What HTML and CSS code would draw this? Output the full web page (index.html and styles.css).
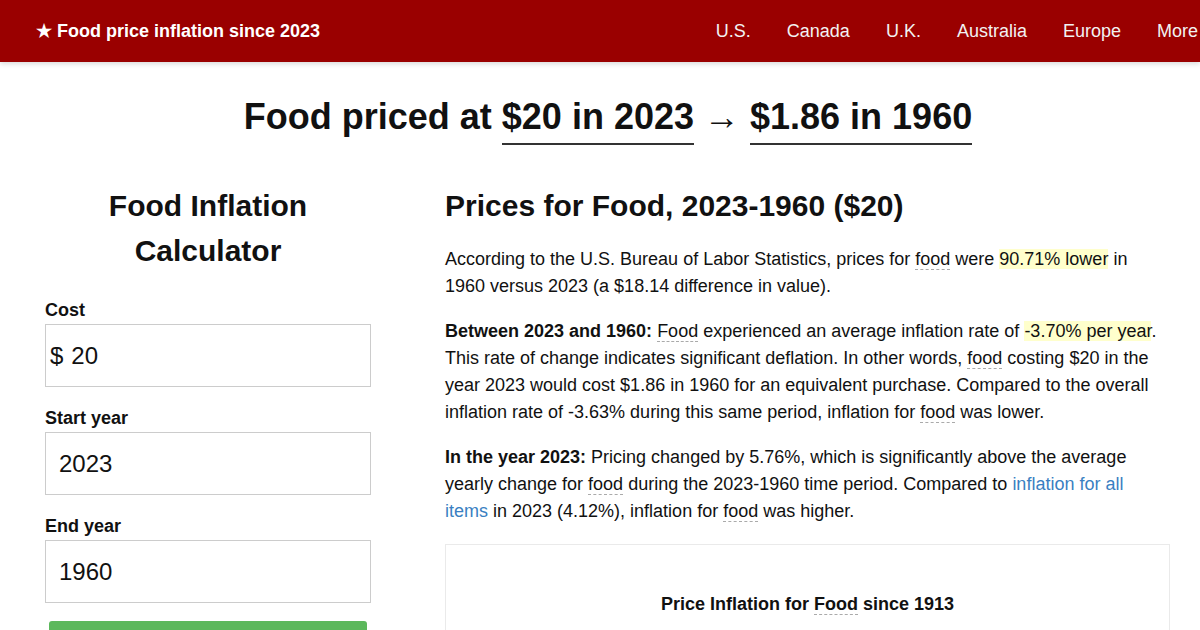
FILE: index.html
```html
<!DOCTYPE html>
<html lang="en">
<head>
<meta charset="utf-8">
<title>Food price inflation since 2023</title>
<link rel="stylesheet" href="styles.css">
</head>
<body>
<header class="topbar">
  <a class="brand" href="#">★ Food price inflation since 2023</a>
  <nav class="nav">
    <a href="#">U.S.</a>
    <a href="#">Canada</a>
    <a href="#">U.K.</a>
    <a href="#">Australia</a>
    <a href="#">Europe</a>
    <a href="#">More</a>
  </nav>
</header>

<h1 class="headline">Food priced at <span class="ul">$20 in 2023</span> <span class="arrow">→</span> <span class="ul">$1.86 in 1960</span></h1>

<main class="page">
  <aside class="calc">
    <h2 class="calc-title">Food Inflation Calculator</h2>
    <label class="field-label">Cost</label>
    <div class="field field-money"><span class="prefix">$</span><span class="value">20</span></div>
    <label class="field-label">Start year</label>
    <div class="field"><span class="value">2023</span></div>
    <label class="field-label">End year</label>
    <div class="field"><span class="value">1960</span></div>
    <button class="btn">Calculate</button>
  </aside>

  <section class="content">
    <h2 class="section-title">Prices for Food, 2023-1960 ($20)</h2>
    <p>According to the U.S. Bureau of Labor Statistics, prices for <span class="term">food</span> were <span class="hl">90.71% lower</span> in 1960 versus 2023 (a $18.14 difference in value).</p>
    <p><b>Between 2023 and 1960:</b> <span class="term">Food</span> experienced an average inflation rate of <span class="hl">-3.70% per year</span>. This rate of change indicates significant deflation. In other words, <span class="term">food</span> costing $20 in the year 2023 would cost $1.86 in 1960 for an equivalent purchase. Compared to the overall inflation rate of -3.63% during this same period, inflation for <span class="term">food</span> was lower.</p>
    <p><b>In the year 2023:</b> Pricing changed by 5.76%, which is significantly above the average yearly change for <span class="term">food</span> during the 2023-1960 time period. Compared to <a class="link" href="#">inflation for all items</a> in 2023 (4.12%), inflation for <span class="term">food</span> was higher.</p>
    <div class="chart">
      <div class="chart-title">Price Inflation for <span class="term">Food</span> since 1913</div>
    </div>
  </section>
</main>
</body>
</html>
```

FILE: styles.css
```css
* { box-sizing: border-box; }
html, body { margin: 0; padding: 0; }
body {
  font-family: "Liberation Sans", Arial, sans-serif;
  color: #111;
  background: #fff;
  overflow: hidden;
}

.topbar {
  height: 62px;
  background: #9a0000;
  display: flex;
  align-items: center;
  padding-left: 36px;
  box-shadow: 0 2px 5px rgba(0,0,0,0.15);
  position: relative;
}
.brand {
  color: #fff;
  font-weight: bold;
  font-size: 18px;
  text-decoration: none;
}
.nav {
  margin-left: auto;
  display: flex;
  gap: 36px;
  margin-right: 2px;
}
.nav a {
  color: #f2f2f2;
  font-size: 18px;
  text-decoration: none;
}

.headline {
  margin: 33px 0 0;
  padding-left: 16px;
  text-align: center;
  font-size: 36px;
  line-height: 43px;
  font-weight: bold;
}
.headline .ul {
  border-bottom: 2px solid #333;
  padding-bottom: 6px;
}
.headline .arrow {
  font-weight: normal;
}

.page {
  display: flex;
  gap: 74px;
  padding: 45px 30px 0 45px;
}
.calc {
  width: 326px;
  flex: none;
  display: flex;
  flex-direction: column;
}
.calc-title {
  margin: 0 0 24px;
  text-align: center;
  font-size: 30px;
  line-height: 45px;
}
.field-label {
  font-weight: bold;
  font-size: 18px;
  line-height: 27px;
}
.field {
  height: 63px;
  border: 1px solid #ccc;
  display: flex;
  align-items: center;
  font-size: 24px;
  padding-left: 13px;
  margin-bottom: 18px;
}
.field-money { padding-left: 4px; }
.field-money .prefix { margin-right: 8px; }
.btn {
  margin: 0 4px;
  height: 40px;
  border: none;
  border-radius: 3px;
  background: #5cb85c;
  color: #fff;
  font-family: inherit;
  font-size: 18px;
}

.content {
  flex: 1;
  min-width: 0;
}
.section-title {
  margin: 0 0 18px;
  font-size: 30px;
  line-height: 45px;
}
.content p {
  margin: 0 0 18px;
  font-size: 18px;
  line-height: 27px;
}
.term {
  border-bottom: 1px dashed #aaa;
}
.hl {
  background: #ffffcc;
}
.link {
  color: #3a7fc2;
  text-decoration: none;
}
.chart {
  margin-top: 19px;
  border: 1px solid #eaeaea;
  height: 200px;
  padding-top: 46px;
  text-align: center;
}
.chart-title {
  font-weight: bold;
  font-size: 18px;
  line-height: 27px;
}
```
